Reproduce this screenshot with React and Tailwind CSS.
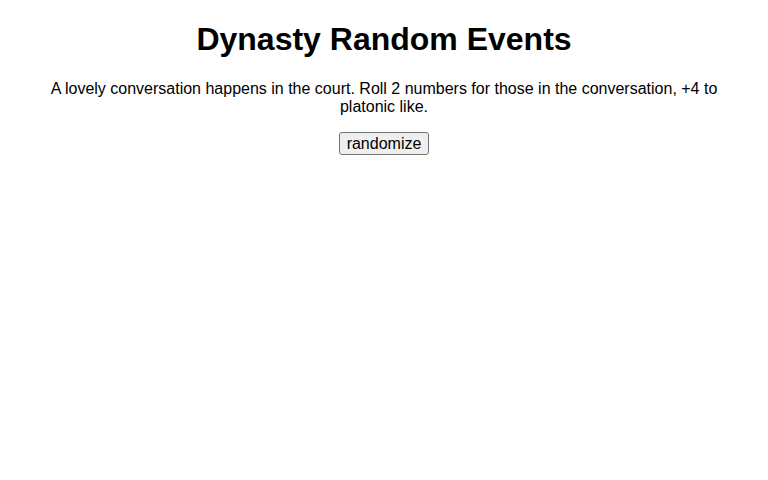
export default function App() {
  return (
    <div className="min-h-screen bg-white px-8 text-center text-black" style={{ fontFamily: '"Liberation Sans", Arial, sans-serif' }}>
      <h1 className="pt-[21px] text-[32px] font-bold leading-[37px]">Dynasty Random Events</h1>
      <p className="mt-[22px] text-[16px] leading-[18px]">
        A lovely conversation happens in the court. Roll 2 numbers for those in the conversation, +4 to platonic like.
      </p>
      <button className="mt-[16px] rounded-[3px] border border-[#767676] bg-[#efefef] px-[7px] py-[1px] text-[16px] leading-[19px] text-black">
        randomize
      </button>
    </div>
  );
}
